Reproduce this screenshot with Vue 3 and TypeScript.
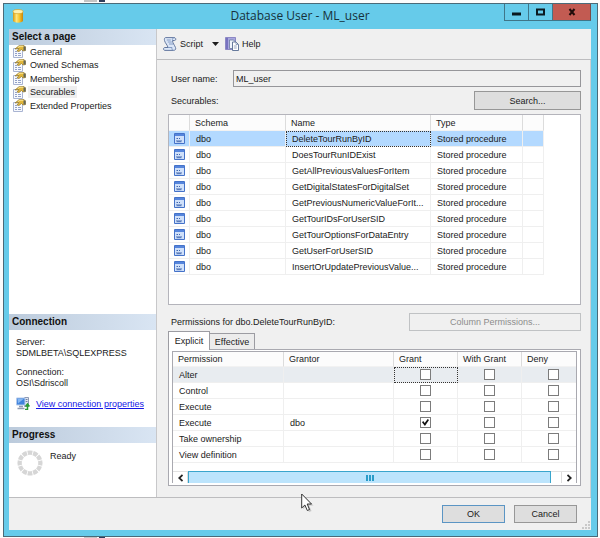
<script setup lang="ts">
import { ref } from 'vue'

interface Permission {
  name: string
  grantor: string
  grant: boolean
  withGrant: boolean
  deny: boolean
}

const pages = ['General', 'Owned Schemas', 'Membership', 'Securables', 'Extended Properties']
const activePage = ref('Securables')
const userName = ref('ML_user')

const securables: string[] = [
  'DeleteTourRunByID',
  'DoesTourRunIDExist',
  'GetAllPreviousValuesForItem',
  'GetDigitalStatesForDigitalSet',
  'GetPreviousNumericValueForIt...',
  'GetTourIDsForUserSID',
  'GetTourOptionsForDataEntry',
  'GetUserForUserSID',
  'InsertOrUpdatePreviousValue...',
]
const selected = ref(0)
const tab = ref('Explicit')

const row = (name: string, grantor = '', grant = false): Permission => ({
  name, grantor, grant, withGrant: false, deny: false,
})
const permissions = ref<Permission[]>([
  row('Alter'),
  row('Control'),
  row('Execute'),
  row('Execute', 'dbo', true),
  row('Take ownership'),
  row('View definition'),
])
const spokes = Array.from({ length: 12 }, (_, i) => i * 30)
</script>

<template>
  <div class="desktop">
    <div class="behind top"><i></i><b></b></div>
    <div class="behind bottom"><i></i><b></b></div>
    <section class="window">
      <header class="titlebar">
        <svg class="db" width="12" height="14" viewBox="0 0 12 14">
          <defs>
            <linearGradient id="gold" x1="0" x2="1">
              <stop offset="0" stop-color="#d99a12" /><stop offset=".35" stop-color="#ffe57a" />
              <stop offset=".65" stop-color="#f8c32c" /><stop offset="1" stop-color="#c98508" />
            </linearGradient>
          </defs>
          <path d="M1 2.5V11.5C1 12.9 3.2 13.7 6 13.7S11 12.9 11 11.5V2.5Z" fill="url(#gold)" />
          <ellipse cx="6" cy="2.6" rx="5" ry="2.1" fill="#fff0b0" stroke="#d9a429" stroke-width=".7" />
        </svg>
        <h1>Database User - ML_user</h1>
        <div class="controls">
          <button type="button" aria-label="Minimize"><svg width="9" height="8"><path d="M0 4.500h9v3h-9z" fill="#0b1a20" /></svg></button>
          <button type="button" aria-label="Maximize"><svg width="9" height="8"><path d="M1 1.500h7v5h-7z" fill="none" stroke="#0b1a20" stroke-width="2" /></svg></button>
          <button type="button" aria-label="Close" class="close"><svg width="8" height="8"><path d="M1.500 1l5 6M6.500 1l-5 6" stroke="#200c0a" stroke-width="2" /></svg></button>
        </div>
      </header>

      <div class="client">
        <div class="content">
          <aside class="sidebar">
            <h2>Select a page</h2>
            <nav class="pages">
              <a v-for="p in pages" :key="p" href="#" :class="{ active: p === activePage }" @click.prevent="activePage = p">
                <svg width="14" height="13" viewBox="0 0 14 13">
                  <path d="M1.500 3.500h9v9h-9z" fill="#f7f9fd" stroke="#a9b4d2" />
                  <path d="M3 6.500h2M3 8.500h2M3 10.500h2M6 8.500h3M6 10.500h3" stroke="#93a1c8" />
                  <path d="M3 4L7 .7 12 .5 13.500 2V5.500L11 6 9.500 4.500 7 6.500 5 6 7 3.500Z" fill="#e2b73a" stroke="#8c7432" stroke-width=".7" />
                  <path d="M6 2.500L8 1.300 11.500 1.300" fill="none" stroke="#fbe694" />
                  <path d="M11.500 1.500h2v4h-2z" fill="#62675c" />
                </svg>
                <span>{{ p }}</span>
              </a>
            </nav>
            <h2>Connection</h2>
            <div class="connection">
              <p>Server:<br />SDMLBETA\SQLEXPRESS</p>
              <p>Connection:<br />OSI\Sdriscoll</p>
              <a href="#" class="props" @click.prevent>
                <svg width="14" height="13" viewBox="0 0 14 13">
                  <path d="M8.500 .5h4v9h-4z" fill="#dfe5f0" stroke="#8d9ab5" />
                  <path d="M9.500 2.500h2M9.500 4.500h2" stroke="#71809f" />
                  <path d="M.5 1h8.500v7H.5z" fill="#3f83dd" stroke="#b3c9ea" />
                  <path d="M1.500 2h6L2 6.500Z" fill="#85b7f3" />
                  <path d="M3 9.500h4M1.500 11.500h7" stroke="#909bb2" stroke-width="1.300" />
                  <path d="M9 12.500h2.500V8M9.500 9.500L11.500 7l2 2.500" fill="none" stroke="#299b31" stroke-width="1.500" />
                </svg>
                <span>View connection properties</span>
              </a>
            </div>
            <h2>Progress</h2>
            <div class="progress">
              <svg width="26" height="26" viewBox="-13 -13 26 26">
                <path v-for="a in spokes" :key="a" :transform="`rotate(${a})`" d="M-2.700 -12.200Q0 -12.900 2.700 -12.200L1.800 -8Q0 -8.500 -1.800 -8Z" fill="#d6d6d6" />
              </svg>
              <span>Ready</span>
            </div>
          </aside>

          <main class="main">
            <div class="toolbar">
              <button type="button">
                <svg width="14" height="14" viewBox="0 0 14 14">
                  <path d="M2.500 .6H11C13.300 .6 13.300 3.500 11.500 3.500H9.500C9.500 6 11.500 8 12.500 10.500 13.200 12.500 12 13.400 10.500 13.400H2C0 13.400 0 10.500 2 10.500H5C4.500 8 2 6 1.500 3.500 1.200 1.800 1.500 .8 2.500 .6Z" fill="#dbe6f7" stroke="#64789f" />
                  <path d="M9.500 3.500C9 2 10 .8 11 .7M5 10.500H9C8.500 12 9.500 13.300 10.500 13.300M3.800 3h4M4.800 5h4M6 7h4" fill="none" stroke="#7b93bd" stroke-width=".9" />
                </svg>
                <span>Script</span>
                <svg class="caret" width="7" height="4"><path d="M0 0h7L3.500 4z" fill="#1d1d1d" /></svg>
              </button>
              <button type="button">
                <svg width="14" height="14" viewBox="0 0 14 14">
                  <path d="M.5 .5h10v12H.5z" fill="#7772bf" stroke="#8c88c4" />
                  <path d="M3 1h7v11H3z" fill="#a9a7df" />
                  <path d="M4.500 3h4l2 2v6.500h-6z" fill="#eef3fb" stroke="#67789c" stroke-width=".8" />
                  <path d="M7.500 5h3.500l2.500 2.500v6h-6z" fill="#fff" stroke="#566b91" stroke-width=".9" />
                  <path d="M11 5v2.500h2.500M8.800 9h3M8.800 11h3" fill="none" stroke="#7d8fb0" stroke-width=".8" />
                </svg>
                <span>Help</span>
              </button>
            </div>

            <div class="body">
              <div class="field">
                <label for="user">User name:</label>
                <input id="user" v-model="userName" type="text" readonly />
              </div>
              <div class="between search">
                <span>Securables:</span>
                <button type="button" class="btn">Search...</button>
              </div>

              <div class="list">
                <table>
                  <colgroup><col class="c-icon" /><col class="c-schema" /><col class="c-name" /><col class="c-type" /><col class="c-icon" /></colgroup>
                  <thead><tr><th></th><th>Schema</th><th>Name</th><th>Type</th><th></th></tr></thead>
                  <tbody>
                    <tr v-for="(s, i) in securables" :key="s" :class="{ selected: i === selected }" @click="selected = i">
                      <td class="icon">
                        <svg width="11" height="11" viewBox="0 0 11 11">
                          <path d="M.5 .5h10v10H.5z" fill="#cfe0fa" stroke="#4472c9" />
                          <path d="M1 1h9v2H1z" fill="#5585dc" />
                          <path d="M2.500 5.500h1.500M5 5.500h1M2.500 7.500h1M4.500 7.500h1M6.500 7.500h1M2.500 8.700h5" stroke="#4268ae" />
                        </svg>
                      </td>
                      <td>dbo</td>
                      <td :class="{ focus: i === selected }">{{ s }}</td>
                      <td>Stored procedure</td>
                      <td></td>
                    </tr>
                  </tbody>
                </table>
              </div>

              <div class="between column">
                <span>Permissions for dbo.DeleteTourRunByID:</span>
                <button type="button" class="btn" disabled>Column Permissions...</button>
              </div>

              <div class="tabs" role="tablist">
                <button v-for="t in ['Explicit', 'Effective']" :key="t" type="button" role="tab" :aria-selected="t === tab" @click="tab = t">{{ t }}</button>
              </div>
              <div class="panel">
                <div class="grid">
                  <table>
                    <colgroup><col class="p-name" /><col class="p-grantor" /><col class="p-check" /><col class="p-check" /><col class="p-check" /></colgroup>
                    <thead><tr><th>Permission</th><th>Grantor</th><th>Grant</th><th>With Grant</th><th>Deny</th></tr></thead>
                    <tbody>
                      <tr v-for="(p, i) in permissions" :key="i" :class="{ current: i === 0 }">
                        <td>{{ p.name }}</td>
                        <td>{{ p.grantor }}</td>
                        <td class="check" :class="{ focus: i === 0 }"><input v-model="p.grant" type="checkbox" :aria-label="`Grant ${p.name}`" /></td>
                        <td class="check"><input v-model="p.withGrant" type="checkbox" :aria-label="`With Grant ${p.name}`" /></td>
                        <td class="check"><input v-model="p.deny" type="checkbox" :aria-label="`Deny ${p.name}`" /></td>
                      </tr>
                    </tbody>
                  </table>
                  <div class="scroll">
                    <button type="button" aria-label="Scroll left"><svg width="5" height="8"><path d="M4.500 1L1.200 4l3.300 3" fill="none" stroke="#222" stroke-width="1.700" /></svg></button>
                    <div class="thumb"><i></i><i></i><i></i></div>
                    <button type="button" aria-label="Scroll right"><svg width="5" height="8"><path d="M.5 1l3.300 3L.5 7" fill="none" stroke="#222" stroke-width="1.700" /></svg></button>
                  </div>
                </div>
              </div>
            </div>
          </main>
        </div>

        <footer class="footer">
          <button type="button" class="btn default">OK</button>
          <button type="button" class="btn">Cancel</button>
          <svg class="grip" width="8" height="8"><path d="M6 0h2v2H6zM3 3h2v2H3zM6 3h2v2H6zM0 6h2v2H0zM3 6h2v2H3zM6 6h2v2H6z" fill="#c9c9c9" /></svg>
        </footer>
      </div>
    </section>
    <svg class="cursor" width="13" height="20" viewBox="0 0 13 20">
      <path d="M2 2v14l3.500-3L8 19l2.500-1-2.500-5.500H12.500z" fill="#999" opacity=".5" />
      <path d="M.7 1v14l3.200-3L6.300 17.500l2.200-1L6.200 11H10.500z" fill="#fff" stroke="#222" stroke-width=".9" />
    </svg>
  </div>
</template>

<style>
body {
  margin: 0;
  background: #fff;
}
</style>

<style scoped>
* {
  box-sizing: border-box;
}
.desktop {
  position: relative;
  display: flex;
  min-height: 100vh;
  padding: 3px 2px 1px 3px;
  background: #fcfcfc;
  font-family: "Liberation Sans", Arial, sans-serif;
  font-size: 9px;
  line-height: 12px;
  color: #1a1a1a;
}
button,
input {
  font: inherit;
  color: inherit;
}
svg {
  flex: none;
  display: block;
}
.behind {
  position: absolute;
  left: 84px;
  display: flex;
  gap: 2px;
}
.behind.top { top: 0; }
.behind.bottom { bottom: 0; }
.behind i { width: 13px; height: 2px; background: #c4c4c4; }
.behind b { width: 6px; height: 2px; background: #2e3d5c; }
.behind.bottom i,
.behind.bottom b { height: 1px; }

.window {
  position: relative;
  flex: 1;
  display: flex;
  flex-direction: column;
  min-width: 0;
  padding: 0 6px 6px 5px;
  border: 1px solid #4a6a78;
  background: #66cbea;
}
.titlebar {
  position: relative;
  display: flex;
  align-items: flex-start;
  justify-content: center;
  height: 25px;
  padding-top: 4px;
}
.db {
  position: absolute;
  left: 3px;
  top: 5px;
}
h1 {
  margin: 0;
  font: 400 12px/16px "Open Sans", sans-serif;
  color: #17313b;
}
.controls {
  position: absolute;
  top: 0;
  right: 0;
  display: flex;
}
.controls button {
  display: flex;
  align-items: center;
  justify-content: center;
  width: 24px;
  height: 17px;
  padding: 0;
  border: 1px solid #3f7689;
  border-top: 0;
  border-right: 0;
  background: transparent;
}
.controls .close {
  width: 39px;
  border-right: 1px solid #7a4a48;
  background: #c25b52;
}

.client {
  flex: 1;
  display: flex;
  flex-direction: column;
  background: #f0f0f0;
}
.content {
  flex: 1;
  display: flex;
  border-bottom: 1px solid #bdbdbf;
}
.sidebar {
  display: flex;
  flex-direction: column;
  width: 148px;
  border-right: 1px solid #c8c8ca;
  background: #fff;
}
h2 {
  margin: 0;
  padding: 2px 3px;
  font: 700 10px/12px "Liberation Sans", Arial, sans-serif;
  color: #111;
  background: linear-gradient(90deg, #bccbdc, #d9e5f3);
}
.pages {
  display: flex;
  flex-direction: column;
  justify-content: space-between;
  height: 67px;
  margin-bottom: auto;
}
.pages a {
  display: flex;
  align-items: center;
  gap: 2px;
  height: 13px;
  padding-left: 3px;
  color: inherit;
  text-decoration: none;
}
.pages span {
  padding: 0 2px;
}
.pages .active span {
  background: #efefef;
}
.connection {
  height: 97px;
  padding: 7px 7px 0;
}
.connection p {
  margin: 0 0 8px;
  line-height: 11px;
}
.props {
  display: flex;
  align-items: center;
  gap: 6px;
  color: #1414e6;
}
.progress {
  display: flex;
  gap: 7px;
  height: 54px;
  padding: 7px 8px;
}

.main {
  flex: 1;
  display: flex;
  flex-direction: column;
  min-width: 0;
}
.toolbar {
  display: flex;
  align-items: center;
  gap: 6px;
  height: 31px;
  padding: 0 6px;
  border-bottom: 1px solid #bdbdbf;
}
.toolbar button {
  display: flex;
  align-items: center;
  gap: 3px;
  padding: 0;
  border: 0;
  background: none;
}
.caret {
  margin-left: 6px;
}
.body {
  flex: 1;
  padding: 10px 9px 10px 11px;
  border-right: 1px solid #cfcfd2;
}
.field {
  display: flex;
  align-items: center;
  padding-left: 3px;
}
.field label {
  width: 62px;
}
.field input {
  flex: 1;
  min-width: 0;
  height: 17px;
  padding: 0 2px;
  border: 1px solid #96969a;
  background: #f0f0f0;
}
.between {
  display: flex;
  align-items: center;
  justify-content: space-between;
  padding-left: 3px;
}
.search {
  margin: 4px 0;
}
.btn {
  width: 63px;
  height: 18px;
  padding: 0;
  border: 1px solid #979797;
  background: #dedede;
}
.btn:disabled {
  border-color: #c0c2c4;
  background: #f0f0f0;
  color: #8c8c8c;
}
.search .btn { width: 107px; height: 19px; }
.column .btn { width: 172px; }

table {
  table-layout: fixed;
  border-collapse: separate;
  border-spacing: 0;
}
th,
td {
  height: 16px;
  padding: 0 0 0 6px;
  border-right: 1px solid #efefef;
  border-bottom: 1px solid #efefef;
  overflow: hidden;
  text-align: left;
  white-space: nowrap;
}
th {
  padding-left: 5px;
  border-right-color: #dcdcdc;
  border-bottom-color: #f2f2f2;
  background: #fcfcfc;
  font-weight: 400;
}
.list {
  min-height: 191px;
  border: 1px solid #b4b4bb;
  background: #fff;
}
.list table { width: 375px; }
.c-icon { width: 21px; }
.c-schema { width: 96px; }
.c-name { width: 145px; }
.c-type { width: 92px; }
td.icon {
  padding-left: 5px;
}
.selected td {
  background: #b3d9ff;
}
td.focus {
  outline: 1px dotted #333;
  outline-offset: -1px;
}

.column {
  margin-top: 8px;
}
.tabs {
  display: flex;
  align-items: flex-end;
  height: 18px;
}
.tabs button {
  height: 16px;
  width: 45px;
  padding: 0;
  border: 1px solid #9c9ca2;
  border-bottom: 0;
  border-left: 0;
  background: #ececec;
}
.tabs [aria-selected="true"] {
  position: relative;
  z-index: 1;
  width: 42px;
  height: 19px;
  margin-bottom: -1px;
  border-left: 1px solid #9c9ca2;
  background: #fff;
}
.panel {
  padding: 1px 3px 2px;
  border: 1px solid #a9a9b0;
  background: #fff;
}
.grid {
  overflow: hidden;
  border: 1px solid #a9a9b0;
  border-bottom: 0;
}
.grid table { width: 413px; }
.p-name { width: 111px; }
.p-grantor { width: 110px; }
.p-check { width: 64px; }
.grid th { height: 15px; }
.current td {
  background: #e8ecf0;
}
td.check {
  padding: 0;
}
.check input {
  appearance: none;
  display: block;
  position: relative;
  width: 11px;
  height: 11px;
  margin: 0 auto;
  border: 1px solid #7c7c7c;
  background: #fff;
}
.check input:checked::after {
  content: "";
  position: absolute;
  inset: 1px;
  background: #111;
  clip-path: polygon(0 45%, 18% 30%, 38% 58%, 82% 0, 100% 14%, 42% 100%);
}
.scroll {
  display: flex;
  height: 12px;
  margin-top: 8px;
  border-top: 1px solid #e2e2e2;
}
.scroll button {
  display: flex;
  align-items: center;
  justify-content: center;
  width: 15px;
  padding: 0;
  border: 0;
  border-right: 1px solid #ddd;
  background: #fff;
}
.scroll button:last-child {
  border-right: 0;
  border-left: 1px solid #ddd;
}
.thumb {
  flex: 1;
  display: flex;
  align-items: center;
  justify-content: center;
  gap: 1px;
  margin: -1px 10px 0 0;
  border: 1px solid #3aa5cc;
  border-bottom: 0;
  background: #bce4fc;
}
.thumb i {
  width: 2px;
  height: 6px;
  background: #2a9cc8;
}

.footer {
  position: relative;
  display: flex;
  justify-content: flex-end;
  gap: 9px;
  padding: 7px 14px 7px 0;
}
.btn.default {
  border-color: #5b95c4;
}
.grip {
  position: absolute;
  right: 1px;
  bottom: 1px;
}
.cursor {
  position: absolute;
  left: 301px;
  top: 493px;
}
</style>
